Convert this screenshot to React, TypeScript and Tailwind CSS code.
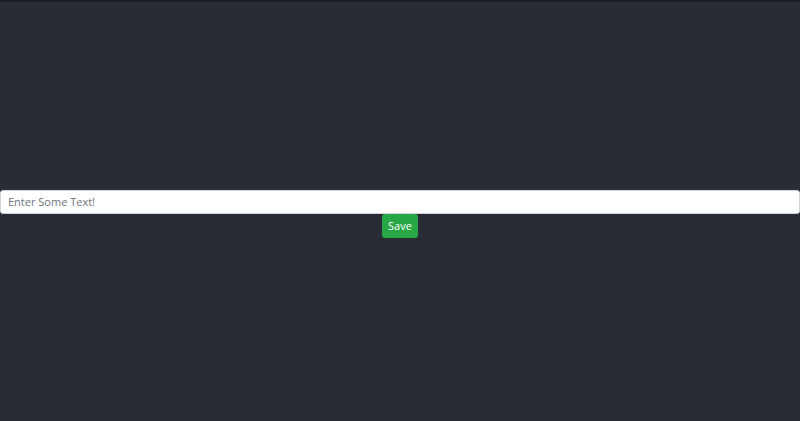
import { useState } from 'react';

export default function App() {
  const [text, setText] = useState('');

  return (
    <div
      className="h-[421px] w-full bg-[#282c34] border-t-2 border-[#1b1d22] flex flex-col justify-center items-center pt-[4px]"
      style={{ fontFamily: '"Open Sans", "Noto Sans", sans-serif' }}
    >
      <input
        type="text"
        value={text}
        onChange={(e) => setText(e.target.value)}
        placeholder="Enter Some Text!"
        className="w-full h-[24px] bg-white border border-[#ced4da] rounded-[3px] px-[7px] text-[11px] text-[#495057] placeholder:text-[#6c757d] outline-none"
      />
      <button className="h-[24px] w-[36px] bg-[#28a745] text-white text-[11px] rounded-[3px] leading-none">
        Save
      </button>
    </div>
  );
}
